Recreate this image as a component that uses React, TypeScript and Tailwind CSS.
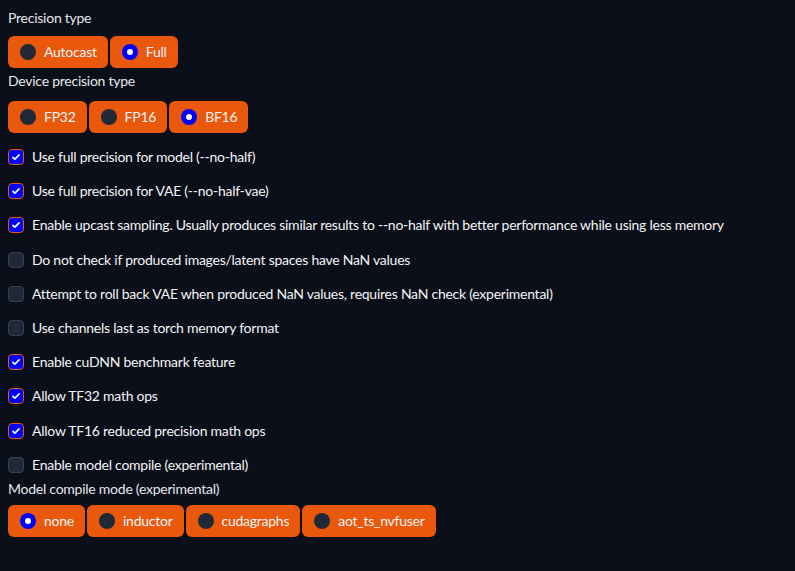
import React from "react";

const font = { fontFamily: "'Source Sans Pro', Lato, 'Noto Sans', sans-serif" };

function Radio({ label, checked }: { label: string; checked?: boolean }) {
  return (
    <label className="flex items-center h-8 pl-3 pr-[11px] rounded-md bg-[#ea580c] text-[#f3f4f6] text-sm">
      {checked ? (
        <span className="w-4 h-4 rounded-full bg-[#0000ff] flex items-center justify-center">
          <span className="w-[6px] h-[6px] rounded-full bg-white" />
        </span>
      ) : (
        <span className="w-4 h-4 rounded-full bg-[#1f2937]" />
      )}
      <span className="ml-2">{label}</span>
    </label>
  );
}

function Check({ label, checked }: { label: string; checked?: boolean }) {
  return (
    <div className="flex items-center h-5 text-sm text-[#f3f4f6]">
      {checked ? (
        <span className="w-4 h-4 rounded-[4px] bg-[#0000ff] border border-[#ea580c] flex items-center justify-center">
          <svg width="10" height="10" viewBox="0 0 16 16" fill="none">
            <path d="M3 8.5l3.2 3L13 4.5" stroke="white" strokeWidth="2.6" strokeLinecap="round" strokeLinejoin="round" />
          </svg>
        </span>
      ) : (
        <span className="w-4 h-4 rounded-[4px] bg-[#1f2937] border border-[#374151]" />
      )}
      <span className="ml-2">{label}</span>
    </div>
  );
}

const checks: [string, boolean][] = [
  ["Use full precision for model (--no-half)", true],
  ["Use full precision for VAE (--no-half-vae)", true],
  ["Enable upcast sampling. Usually produces similar results to --no-half with better performance while using less memory", true],
  ["Do not check if produced images/latent spaces have NaN values", false],
  ["Attempt to roll back VAE when produced NaN values, requires NaN check (experimental)", false],
  ["Use channels last as torch memory format", false],
  ["Enable cuDNN benchmark feature", true],
  ["Allow TF32 math ops", true],
  ["Allow TF16 reduced precision math ops", true],
  ["Enable model compile (experimental)", false],
];

export default function App() {
  return (
    <div className="w-[795px] h-[571px] bg-[#0b0f19] px-2 pt-2 tracking-[-0.25px]" style={font}>
      <div className="text-sm text-[#e5e7eb] leading-5">Precision type</div>
      <div className="flex gap-[2px] mt-2">
        <Radio label="Autocast" />
        <Radio label="Full" checked />
      </div>
      <div className="text-sm text-[#e5e7eb] leading-5 mt-[3px]">Device precision type</div>
      <div className="flex gap-[2px] mt-[10px]">
        <Radio label="FP32" />
        <Radio label="FP16" />
        <Radio label="BF16" checked />
      </div>
      <div className="flex flex-col gap-[14.2px] mt-[14px]">
        {checks.map(([l, c]) => (
          <Check key={l} label={l} checked={c} />
        ))}
      </div>
      <div className="text-sm text-[#e5e7eb] leading-5 mt-[4px]">Model compile mode (experimental)</div>
      <div className="flex gap-[2px] mt-[6px]">
        <Radio label="none" checked />
        <Radio label="inductor" />
        <Radio label="cudagraphs" />
        <Radio label="aot_ts_nvfuser" />
      </div>
    </div>
  );
}
